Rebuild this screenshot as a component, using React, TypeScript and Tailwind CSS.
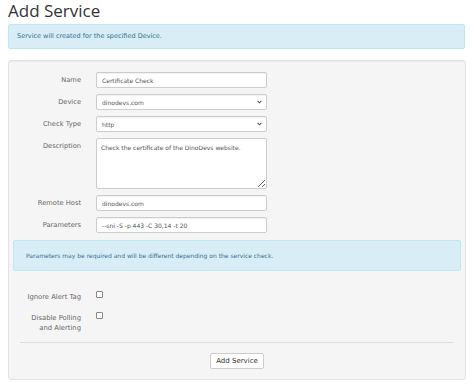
import React from "react";

const font = { fontFamily: "'DejaVu Sans', Verdana, sans-serif" };

function Row({ label, children, top }: { label: React.ReactNode; children: React.ReactNode; top?: boolean }) {
  return (
    <div className={`flex ${top ? "items-start" : "items-center"} gap-[15px]`}>
      <div className={`w-[72px] shrink-0 text-right text-[6.7px] leading-[10px] text-[#666] ${top ? "pt-[3px]" : ""}`}>{label}</div>
      {children}
    </div>
  );
}

const inputCls =
  "block w-[171px] h-[16px] border border-[#ccc] rounded-[2px] bg-white px-[5px] text-[6px] text-[#555] outline-none shadow-[inset_0_1px_1px_rgba(0,0,0,0.06)]";

function Select({ value }: { value: string }) {
  return (
    <div className="relative flex w-[171px] h-[16px]">
      <select defaultValue={value} className={`${inputCls} appearance-none`} style={font}>
        <option>{value}</option>
      </select>
      <svg className="absolute right-[5px] top-[6px] w-[5px] h-[4px] pointer-events-none" viewBox="0 0 5 4">
        <path d="M0.6 0.8 L2.5 2.8 L4.4 0.8" fill="none" stroke="#555" strokeWidth="1.1" />
      </svg>
    </div>
  );
}

function Check() {
  return <input type="checkbox" className="block appearance-none w-[7px] h-[7px] border border-[#888] rounded-[1px] bg-white m-0 shrink-0" />;
}

export default function App() {
  return (
    <div className="w-[474px] h-[389px] bg-white overflow-hidden" style={font}>
      <h1 className="px-[8px] text-[17px] leading-[21px] text-[#333]" style={{ fontFamily: "'Open Sans', sans-serif" }}>
        Add Service
      </h1>
      <div className="mx-[8px] mt-[3px] w-[457px] h-[25px] flex items-center px-[8px] bg-[#d9edf7] border border-[#bce8f1] rounded-[2px] text-[6.5px] text-[#31708f]">
        Service will created for the specified Device.
      </div>
      <div className="mx-[8px] mt-[11px] w-[458px] h-[320px] bg-[#f5f5f5] border border-[#e3e3e3] rounded-[3px] shadow-[inset_0_1px_1px_rgba(0,0,0,0.04)] pt-[11px]">
        <div className="flex flex-col gap-[6px]">
          <Row label="Name">
            <input className={inputCls} defaultValue="Certificate Check" style={font} />
          </Row>
          <Row label="Device">
            <Select value="dinodevs.com" />
          </Row>
          <Row label="Check Type">
            <Select value="http" />
          </Row>
          <Row label="Description" top>
            <textarea
              className="block w-[171px] h-[51px] border border-[#ccc] rounded-[2px] bg-white px-[4px] py-[4px] text-[6px] leading-[10px] text-[#555] outline-none"
              defaultValue="Check the certificate of the DinoDevs website."
              style={font}
            />
          </Row>
          <Row label="Remote Host">
            <input className={inputCls} defaultValue="dinodevs.com" style={font} />
          </Row>
          <Row label="Parameters">
            <input className={inputCls} defaultValue="--sni -S -p 443 -C 30,14 -t 20" style={font} />
          </Row>
        </div>
        <div className="mx-[4px] mt-[7px] h-[31px] flex items-center px-[12px] bg-[#d9edf7] border border-[#bce8f1] rounded-[2px] text-[6px] text-[#31708f]">
          Parameters may be required and will be different depending on the service check.
        </div>
        <div className="mt-[20px] flex flex-col gap-[10px]">
          <div className="flex items-start gap-[15px]">
            <div className="w-[72px] text-right text-[6.8px] leading-[10px] text-[#666] pt-[1px]">Ignore Alert Tag</div>
            <Check />
          </div>
          <div className="flex items-start gap-[15px]">
            <div className="w-[72px] text-right text-[6.8px] leading-[10px] text-[#666] pt-[1px]">
              Disable Polling
              <br />
              and Alerting
            </div>
            <Check />
          </div>
        </div>
        <div className="mx-[11px] mt-[9px] border-t border-[#ddd]" />
        <div className="flex justify-center mt-[10px]">
          <button className="h-[16px] px-[5px] bg-white border border-[#ccc] rounded-[2px] text-[7px] text-[#333]" style={font}>
            Add Service
          </button>
        </div>
      </div>
    </div>
  );
}
